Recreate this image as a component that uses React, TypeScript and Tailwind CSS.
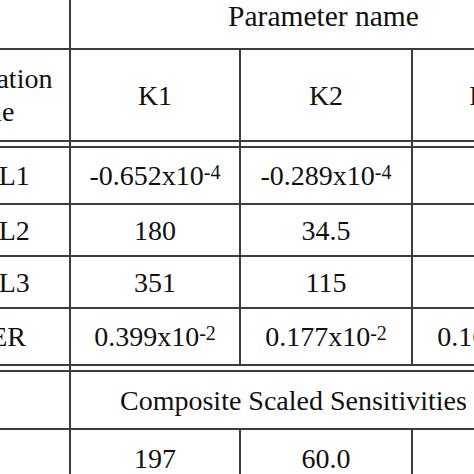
const line = 'border-[#3c3c3c]';
const cell = `flex items-center justify-center border-r-2 ${line}`;
const widths = ['w-[172px]', 'w-[170px]', 'w-[172px]', 'w-[172px]'];

type Value = { base: string; exp?: string };

const rows: { label: string; height: string; values: Value[] }[] = [
  {
    label: 'WELL1',
    height: 'h-[57px]',
    values: [{ base: '-0.652x10', exp: '-4' }, { base: '-0.289x10', exp: '-4' }, { base: '5.6' }],
  },
  { label: 'WELL2', height: 'h-[52px]', values: [{ base: '180' }, { base: '34.5' }, { base: '9.2' }] },
  { label: 'WELL3', height: 'h-[52px]', values: [{ base: '351' }, { base: '115' }, { base: '4.7' }] },
  {
    label: 'RIVER',
    height: 'h-[57px]',
    values: [{ base: '0.399x10', exp: '-2' }, { base: '0.177x10', exp: '-2' }, { base: '0.163x10', exp: '-2' }],
  },
];

function Num({ value }: { value: Value }) {
  return (
    <span>
      {value.base}
      {value.exp && <sup className="relative top-[-6px] text-[20px]">{value.exp}</sup>}
    </span>
  );
}

export default function App() {
  return (
    <div className="h-[474px] w-[474px] overflow-hidden bg-white">
      <div
        className="ml-[-101px] mt-[-15px] w-[686px] text-[28px] leading-[31px] text-[#111]"
        style={{ fontFamily: '"Liberation Serif", "Times New Roman", serif' }}
      >
        {/* header */}
        <div className={`flex h-[65px] border-b-2 ${line}`}>
          <div className={`${cell} ${widths[0]}`} />
          <div className="flex w-[505px] items-center justify-center text-[29.5px]">Parameter name</div>
        </div>

        <div className={`flex h-[92px] border-b-2 ${line}`}>
          <div className={`${cell} ${widths[0]} flex-col leading-[33px]`}>
            <span>Observation</span>
            <span>name</span>
          </div>
          <div className={`${cell} ${widths[1]}`}>K1</div>
          <div className={`${cell} ${widths[2]}`}>K2</div>
          <div className={`${cell} ${widths[3]}`}>RCH</div>
        </div>

        {/* double rule */}
        <div className={`flex h-[6px] border-b-2 ${line}`}>
          <div className={`${cell} ${widths[0]}`} />
          <div className={`${cell} ${widths[1]}`} />
          <div className={`${cell} ${widths[2]}`} />
          <div className={`${cell} ${widths[3]}`} />
        </div>

        {rows.map((row) => (
          <div key={row.label} className={`flex ${row.height} border-b-2 ${line}`}>
            <div className={`${cell} ${widths[0]}`}>{row.label}</div>
            {row.values.map((v, i) => (
              <div key={i} className={`${cell} ${widths[i + 1]}`}>
                <Num value={v} />
              </div>
            ))}
          </div>
        ))}

        <div className={`flex h-[6px] border-b-2 ${line}`}>
          <div className={`${cell} ${widths[0]}`} />
        </div>

        <div className={`flex h-[58px] border-b-2 ${line}`}>
          <div className={`${cell} ${widths[0]}`} />
          <div className="flex w-[514px] items-center pl-[49px]">Composite Scaled Sensitivities</div>
        </div>

        <div className="flex h-[57px]">
          <div className={`${cell} ${widths[0]}`} />
          <div className={`${cell} ${widths[1]}`}>197</div>
          <div className={`${cell} ${widths[2]}`}>60.0</div>
          <div className={`${cell} ${widths[3]}`}>9.8</div>
        </div>
      </div>
    </div>
  );
}
